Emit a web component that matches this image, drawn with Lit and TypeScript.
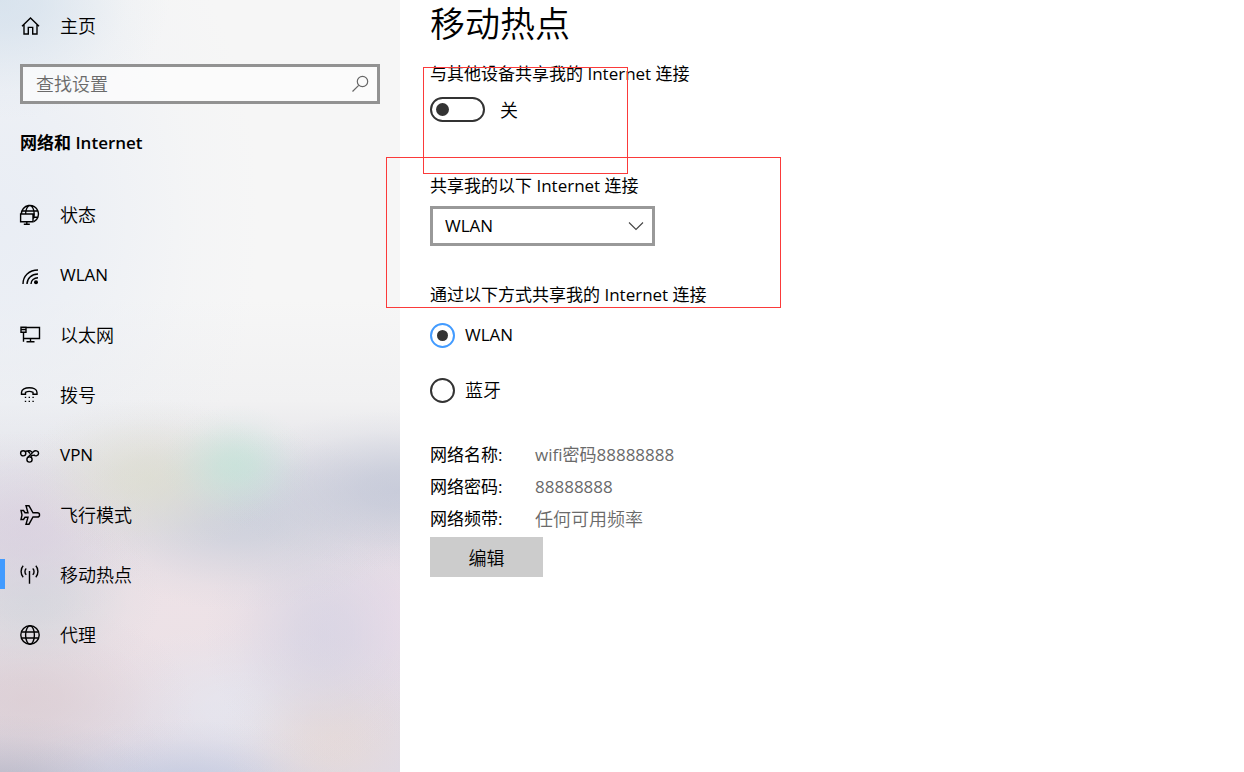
import { LitElement, html, css, svg, unsafeCSS, TemplateResult } from "lit";
import { customElement, property, state } from "lit/decorators.js";

const icons: Record<string, TemplateResult> = {
  home: svg`<path d="M2 10.2 10.5 2 19 10.2M4 8.6V18h4.3v-6.6h4.4V18H17V8.6"/>`,
  status: svg`<path d="M1.300 9A8.600 8.600 0 1 1 14 16.600M5.600 9C5.600 3.500 8 .6 9.900 .6C11.800 .6 14.200 3.500 14.200 9C14.200 10.500 14 12 13.500 13.500M2 6H17.800M13.500 12.300H17.800M.6 9H13V16.700H.6ZM6.800 16.700V19M3.800 19.200H9.800"/>`,
  wlan: svg`<path d="M3 19C3 11 9 5 18 5M7 19C7 13.500 11.500 9 18 9M11 19C11 15.500 14 12.800 18 12.800"/><circle cx="16" cy="17.300" r="2" fill="currentColor" stroke="none"/>`,
  ethernet: svg`<path d="M6 2.500H19.500V13.500H4M10.500 13.500V16.700M6.500 16.800H14.500M1 2.200H6V7.200H1ZM1 4.500H6M3.500 7.500V16.700"/>`,
  dial: svg`<path d="M1.500 9.300V7.500C1.500 1.200 17 1.200 17 7.500V9.300H13V7.300C11 6.300 7.500 6.300 5.500 7.300V9.300Z"/><path stroke-dasharray="1.300 2.700" d="M5.500 11.800V17.200M9.300 11.800V17.200M13.100 11.800V17.200"/>`,
  vpn: svg`<circle cx="3.200" cy="8.300" r="2.600"/><circle cx="9.500" cy="14.500" r="2.600"/><path d="M5.200 6.700C6.500 5.500 8 6 9 7.300L10 8.500M7.500 5.700H10L12 7M11.200 12.500C10.700 11 11.700 10.300 13.500 10.300M7.700 12.600 13.300 6.800C15 4.900 18.600 5.600 18.600 8.300C18.600 10.700 15.500 11.800 13.700 9.700"/>`,
  plane: svg`<path d="M6 .8H9L13 7.800H17.300C20.300 7.800 20.300 12 17.300 12H13L9 19.200H6L8 12.300H5L3.500 14.500H1L2 10 1 5.500H3.500L5 7.700H8Z"/>`,
  hotspot: svg`<path d="M9.500 6V18.700M3.200 .8C.4 3.500 .4 9.500 3.200 12.200M6.300 3.500C4.500 5 4.500 8.300 6.300 9.800M12.700 3.500C14.500 5 14.500 8.300 12.700 9.800M15.800 .8C18.600 3.500 18.600 9.500 15.800 12.200"/>`,
  proxy: svg`<circle cx="10" cy="10" r="9.200"/><ellipse cx="10" cy="10" rx="4.400" ry="9.200"/><path d="M1.600 7H18.400M1.600 13H18.400"/>`,
};

const icon = (name: string) =>
  html`<svg class="icon" viewBox="0 0 20 20" aria-hidden="true">${icons[name]}</svg>`;

// Soft colour spots of the acrylic backdrop: radii, centre, colour.
const spots: [number, number, string, number, string][] = [
  [75, 60, "59%", 465, "#c2e4d8"],
  [130, 80, "37%", 478, "#dcddcd"],
  [180, 80, "100%", 490, "#bdc3d5"],
  [170, 90, "60%", 520, "#c5ccd9"],
  [130, 100, "6%", 530, "#d8cfdf"],
  [130, 90, "8%", 600, "#cfd5db"],
  [120, 130, "81%", 635, "#d4d2e3"],
  [110, 100, "100%", 615, "#ebdcea"],
  [110, 100, "83%", 735, "#e7d9d4"],
  [190, 70, "46%", 790, "#bac5de"],
  [170, 80, "0%", 795, "#a8a9ba"],
  [170, 100, "6%", 700, "#dacbd0"],
  [150, 90, "60%", 710, "#e6e8f1"],
  [330, 190, "45%", 600, "#f2e5e8"],
  [170, 120, "0%", 0, "#cddcea"],
  [260, 380, "0%", 220, "#e4eaf4"],
];

const backdrop = unsafeCSS(
  spots
    .map(([rx, ry, x, y, c]) =>
      `radial-gradient(ellipse ${rx}px ${ry}px at ${x} ${y}px, ${c}b0, ${c}98 22%, ${c}58 48%, ${c}1a 75%, ${c}00)`)
    .join(",")
);

const shared = css`
  * { box-sizing: border-box; }
  .icon {
    width: 20px; height: 20px; flex: none; overflow: visible;
    fill: none; stroke: currentColor; stroke-width: 1.4;
  }
  .cjk { font-size: 18px; font-weight: 350; }
`;

@customElement("settings-nav")
class SettingsNav extends LitElement {
  @property() current = "hotspot";

  private items = [
    ["status", "状态"],
    ["wlan", "WLAN"],
    ["ethernet", "以太网"],
    ["dial", "拨号"],
    ["vpn", "VPN"],
    ["plane", "飞行模式"],
    ["hotspot", "移动热点"],
    ["proxy", "代理"],
  ];

  static styles = [shared, css`
    :host {
      display: block; font-size: 17px; line-height: 24px;
      background:
        ${backdrop},
        linear-gradient(#f6f6f6 0px, #f6f6f6 300px, #f1f1f2 400px, #e3e2e7 470px, #dddae2 540px, #e4dce4 620px, #dfdae5 772px);
    }
    .home, .item {
      display: flex; align-items: center; gap: 20px;
      color: #000; text-decoration: none;
    }
    .home { height: 52px; padding: 0 20px; }
    .search {
      display: flex; align-items: center;
      height: 40px; margin: 12px 20px 0; padding: 0 8px 0 13px;
      border: 3px solid #929292; background: #fdfdfdb0;
    }
    .query {
      flex: 1; min-width: 0; border: 0; outline: 0; padding: 0; background: none;
      font-family: inherit; line-height: 24px; color: #000;
    }
    .query::placeholder { color: #6a6a6a; opacity: 1; }
    .find { display: flex; padding: 0; border: 0; background: none; color: #666; }
    .find .icon { width: 18px; height: 18px; stroke-width: 1.2; }
    .title { margin: 27px 20px 0; font-size: 17px; line-height: 24px; font-weight: 600; }
    .list { list-style: none; margin: 30px 0 0; padding: 0; }
    .item { position: relative; height: 60px; padding: 0 20px; }
    .item[aria-current="page"]::before {
      content: ""; position: absolute; left: 0; top: 14px; width: 5px; height: 30px; background: #429bff;
    }
  `];

  render() {
    return html`
      <a class="home" href="#home">${icon("home")}<span class="cjk">主页</span></a>
      <div class="search">
        <input class="query cjk" type="text" aria-label="查找设置" placeholder="查找设置" />
        <button class="find" aria-label="查找">
          <svg class="icon" viewBox="0 0 18 18" aria-hidden="true">
            <circle cx="11.500" cy="6.500" r="5.200" /><path d="M7.700 10.300 1.500 16.500" />
          </svg>
        </button>
      </div>
      <h2 class="title">网络和 Internet</h2>
      <nav>
        <ul class="list">
          ${this.items.map(([id, text]) => html`
            <li>
              <a class="item" href="#${id}" aria-current=${id === this.current ? "page" : "false"}>
                ${icon(id)}<span class=${/^[A-Z]+$/.test(text) ? "" : "cjk"}>${text}</span>
              </a>
            </li>`)}
        </ul>
      </nav>
    `;
  }
}

@customElement("hotspot-page")
class HotspotPage extends LitElement {
  @state() private on = false;

  static styles = [shared, css`
    :host { display: block; position: relative; padding: 0 30px; font-size: 17px; line-height: 24px; }
    h1 { margin: 0; font-size: 35px; line-height: 48px; font-weight: 350; }
    .label { display: block; margin: 0; padding: 0; }
    .sharing { margin-top: 14px; }
    .switch-row { display: flex; align-items: center; gap: 15px; margin-top: 11px; height: 25px; }
    .switch {
      appearance: none; margin: 0; width: 55px; height: 25px; padding: 0 4px;
      border: 2px solid #333; border-radius: 13px; display: flex; align-items: center;
    }
    .switch::before { content: ""; width: 13px; height: 13px; border-radius: 50%; background: #333; }
    .switch:checked { justify-content: flex-end; }
    .source { margin-top: 52px; }
    .picker { display: grid; width: 225px; height: 40px; margin-top: 8px; align-items: center; }
    .picker > * { grid-area: 1 / 1; }
    .select {
      appearance: none; width: 100%; height: 100%; margin: 0; padding: 0 40px 0 12px;
      border: 3px solid #999; border-radius: 0; background: #fff; color: #000; font: inherit;
    }
    .chevron {
      justify-self: end; width: 16px; height: 10px; margin-right: 11px; pointer-events: none;
      fill: none; stroke: #444; stroke-width: 1.1;
    }
    .via { margin: 37px 0 0; padding: 0; border: 0; min-width: 0; }
    .option { display: flex; align-items: center; gap: 10px; height: 26px; margin-top: 29px; }
    .option:first-of-type { margin-top: 15px; }
    .radio {
      appearance: none; margin: 0; width: 25px; height: 25px; border-radius: 50%;
      border: 2px solid #333; display: grid; place-items: center;
    }
    .radio:checked { border-color: #429bff; }
    .radio:checked::before { content: ""; width: 11px; height: 11px; border-radius: 50%; background: #333; }
    .info { display: grid; grid-template-columns: 105px 1fr; margin: 36px 0 0; line-height: 32px; }
    .info dt, .info dd { margin: 0; }
    .info dd { color: #6a6a6a; }
    .edit {
      display: block; width: 113px; height: 40px; margin-top: 2px; padding: 0;
      border: 0; background: #ccc; color: #000; font-family: inherit;
    }
    .mark { position: absolute; border: 1px solid #fb3a3a; pointer-events: none; }
    .mark-switch { left: 23px; top: 67px; width: 205px; height: 107px; }
    .mark-source { left: -14px; top: 157px; width: 395px; height: 151px; }
  `];

  render() {
    return html`
      <h1>移动热点</h1>
      <section class="sharing">
        <label class="label" for="share">与其他设备共享我的 Internet 连接</label>
        <div class="switch-row">
          <input id="share" class="switch" type="checkbox" role="switch" .checked=${this.on}
            @change=${(e: Event) => (this.on = (e.target as HTMLInputElement).checked)} />
          <span class="cjk">${this.on ? "开" : "关"}</span>
        </div>
      </section>
      <section class="source">
        <label class="label" for="source">共享我的以下 Internet 连接</label>
        <div class="picker">
          <select id="source" class="select"><option>WLAN</option></select>
          <svg class="chevron" viewBox="0 0 16 10" aria-hidden="true"><path d="M1 1.500 8 8.500 15 1.500" /></svg>
        </div>
      </section>
      <fieldset class="via">
        <legend class="label">通过以下方式共享我的 Internet 连接</legend>
        <label class="option"><input class="radio" type="radio" name="via" checked /><span>WLAN</span></label>
        <label class="option"><input class="radio" type="radio" name="via" /><span class="cjk">蓝牙</span></label>
      </fieldset>
      <dl class="info">
        <dt>网络名称:</dt><dd>wifi密码88888888</dd>
        <dt>网络密码:</dt><dd>88888888</dd>
        <dt>网络频带:</dt><dd class="cjk">任何可用频率</dd>
      </dl>
      <button class="edit cjk">编辑</button>
      <div class="mark mark-switch"></div>
      <div class="mark mark-source"></div>
    `;
  }
}

@customElement("app-root")
class AppRoot extends LitElement {
  static styles = css`
    :host {
      display: grid; grid-template-columns: 400px minmax(0, 1fr); min-height: 100vh;
      background: #fff; color: #000;
      font-family: "Open Sans", "Noto Sans CJK SC", sans-serif;
    }
  `;

  render() {
    return html`<settings-nav></settings-nav><hotspot-page></hotspot-page>`;
  }
}
